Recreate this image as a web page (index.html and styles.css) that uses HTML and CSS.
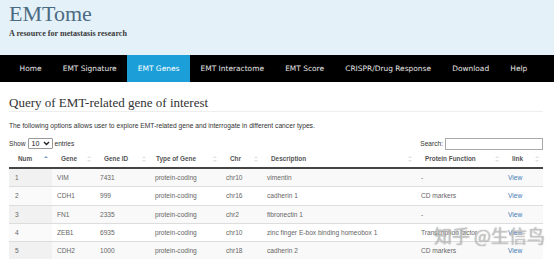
FILE: index.html
```html
<!DOCTYPE html>
<html lang="en">
<head>
    <meta charset="UTF-8">
    <title>EMTome - EMT Genes</title>
    <link rel="stylesheet" href="styles.css">
</head>
<body>

    <header class="site-header">
        <h1 class="brand">EMTome</h1>
        <p class="tagline">A resource for metastasis research</p>
    </header>

    <nav class="main-nav">
        <a href="#">Home</a>
        <a href="#">EMT Signature</a>
        <a href="#" class="active">EMT Genes</a>
        <a href="#">EMT Interactome</a>
        <a href="#">EMT Score</a>
        <a href="#">CRISPR/Drug Response</a>
        <a href="#">Download</a>
        <a href="#">Help</a>
    </nav>

    <main class="content">
        <h2 class="page-title">Query of EMT-related gene of interest</h2>
        <p class="intro">The following options allows user to explore EMT-related gene and interrogate in different cancer types.</p>

        <div class="table-tools">
            <label class="length">Show
                <span class="fake-select">10
                    <svg width="7" height="5" viewBox="0 0 7 5"><path d="M1 1 L3.5 3.5 L6 1" fill="none" stroke="#222" stroke-width="1.4"/></svg>
                </span>
                entries</label>
            <label class="search">Search: <span class="fake-input"></span></label>
        </div>

        <table class="genes">
            <colgroup>
                <col style="width:43px">
                <col style="width:43px">
                <col style="width:55px">
                <col style="width:71px">
                <col style="width:41px">
                <col style="width:154px">
                <col style="width:87px">
                <col style="width:40px">
            </colgroup>
            <thead>
                <tr>
                    <th>Num<span class="sort asc"></span></th>
                    <th>Gene<span class="sort"></span></th>
                    <th>Gene ID<span class="sort"></span></th>
                    <th class="tight">Type of Gene<span class="sort"></span></th>
                    <th>Chr<span class="sort"></span></th>
                    <th>Description<span class="sort"></span></th>
                    <th>Protein Function<span class="sort"></span></th>
                    <th>link<span class="sort"></span></th>
                </tr>
            </thead>
            <tbody>
                <tr>
                    <td>1</td><td>VIM</td><td>7431</td><td>protein-coding</td><td>chr10</td>
                    <td>vimentin</td><td>-</td><td><a href="#">View</a></td>
                </tr>
                <tr>
                    <td>2</td><td>CDH1</td><td>999</td><td>protein-coding</td><td>chr16</td>
                    <td>cadherin 1</td><td>CD markers</td><td><a href="#">View</a></td>
                </tr>
                <tr>
                    <td>3</td><td>FN1</td><td>2335</td><td>protein-coding</td><td>chr2</td>
                    <td>fibronectin 1</td><td>-</td><td><a href="#">View</a></td>
                </tr>
                <tr>
                    <td>4</td><td>ZEB1</td><td>6935</td><td>protein-coding</td><td>chr10</td>
                    <td>zinc finger E-box binding homeobox 1</td><td>Transcription factor</td><td><a href="#">View</a></td>
                </tr>
                <tr>
                    <td>5</td><td>CDH2</td><td>1000</td><td>protein-coding</td><td>chr18</td>
                    <td>cadherin 2</td><td>CD markers</td><td><a href="#">View</a></td>
                </tr>
            </tbody>
        </table>

        <div class="watermark">知乎 @生信鸟</div>
    </main>

</body>
</html>
```

FILE: styles.css
```css
body {
    margin: 0;
    padding: 0;
    background-color: #ffffff;
    font-family: "Liberation Sans", Arial, sans-serif;
    color: #333333;
    overflow: hidden;
}

/* header */
.site-header {
    background-color: #e4f1f9;
    height: 55px;
    box-sizing: border-box;
    padding: 2px 9px 0 9px;
}

.brand {
    margin: 0;
    font-family: "Liberation Serif", "Times New Roman", serif;
    font-weight: normal;
    font-size: 22px;
    line-height: 24px;
    color: #4b6b82;
}

.tagline {
    margin: 3px 0 0 0;
    font-family: "Liberation Serif", "Times New Roman", serif;
    font-weight: bold;
    font-size: 8.1px;
    line-height: 10px;
    color: #3a3a3a;
}

/* nav bar */
.main-nav {
    display: flex;
    background-color: #000000;
    height: 27px;
    padding-left: 9px;
}

.main-nav a {
    display: flex;
    align-items: center;
    padding: 0 10.6px;
    font-family: "DejaVu Sans", Verdana, sans-serif;
    font-size: 7.45px;
    color: #e6e6e6;
    text-decoration: none;
}

.main-nav a.active {
    background-color: #1c9fd9;
    color: #ffffff;
}

/* content */
.content {
    position: relative;
    padding: 0 11px 0 9px;
}

.page-title {
    margin: 13px 0 0 0;
    font-family: "Liberation Serif", "Times New Roman", serif;
    font-weight: normal;
    font-size: 13px;
    line-height: 16px;
    color: #333333;
    border-bottom: 1px solid #eeeeee;
}

.intro {
    margin: 9px 0 0 0;
    font-size: 6.7px;
    line-height: 10px;
    color: #333333;
}

.table-tools {
    display: flex;
    justify-content: space-between;
    align-items: center;
    margin-top: 6px;
    height: 13px;
    font-size: 6.6px;
    color: #333333;
}

.length,
.search {
    display: flex;
    align-items: center;
    gap: 2px;
}

.fake-select {
    display: flex;
    align-items: center;
    justify-content: space-between;
    box-sizing: border-box;
    width: 25px;
    height: 11px;
    padding: 0 2px 0 3px;
    border: 1px solid #9a9a9a;
    border-radius: 1px;
    font-size: 7px;
    color: #111111;
    background-color: #ffffff;
}

.fake-input {
    display: block;
    box-sizing: border-box;
    width: 98px;
    height: 12px;
    border: 1px solid #a9a9a9;
    background-color: #ffffff;
}

/* table */
.genes {
    width: 534px;
    margin-top: 0;
    border-collapse: collapse;
    table-layout: fixed;
    font-size: 6.6px;
}

.genes th {
    position: relative;
    height: 17px;
    padding: 0 0 0 9px;
    text-align: left;
    font-weight: bold;
    font-size: 6.4px;
    color: #555555;
    border-bottom: 2px solid #444444;
}

.genes th.tight {
    padding-left: 6px;
}

.sort {
    position: absolute;
    right: 4px;
    top: 6px;
    width: 4px;
    height: 6px;
}

.sort::before,
.sort::after {
    content: "";
    position: absolute;
    left: 0;
    border-left: 2px solid transparent;
    border-right: 2px solid transparent;
}

.sort::before {
    top: 0;
    border-bottom: 2.5px solid #e2e2e2;
}

.sort::after {
    bottom: 0;
    border-top: 2.5px solid #e2e2e2;
}

.sort.asc::before {
    border-bottom-color: #7b9cc8;
}

.sort.asc::after {
    border-top-color: transparent;
}

.genes td {
    height: 17.3px;
    padding: 0 0 0 5px;
    color: #666666;
    border-top: 1px solid #dddddd;
    white-space: nowrap;
    overflow: hidden;
}

.genes tbody tr:first-child td {
    border-top: none;
}

.genes td:first-child {
    padding-left: 6px;
}

.genes tbody tr:nth-child(odd) td {
    background-color: #f9f9f9;
}

.genes tbody tr:nth-child(odd) td:first-child {
    background-color: #f1f1f1;
}

.genes tbody tr:nth-child(even) td:first-child {
    background-color: #fafafa;
}

.genes td a {
    color: #3d79b5;
    text-decoration: none;
}

/* watermark over the table */
.watermark {
    position: absolute;
    left: 434px;
    top: 129px;
    font-family: "Noto Sans CJK SC", sans-serif;
    font-size: 18px;
    line-height: 22px;
    color: rgba(235, 235, 235, 0.6);
    text-shadow: 0 0 1px rgba(110, 110, 110, 0.9);
    white-space: nowrap;
}
```
